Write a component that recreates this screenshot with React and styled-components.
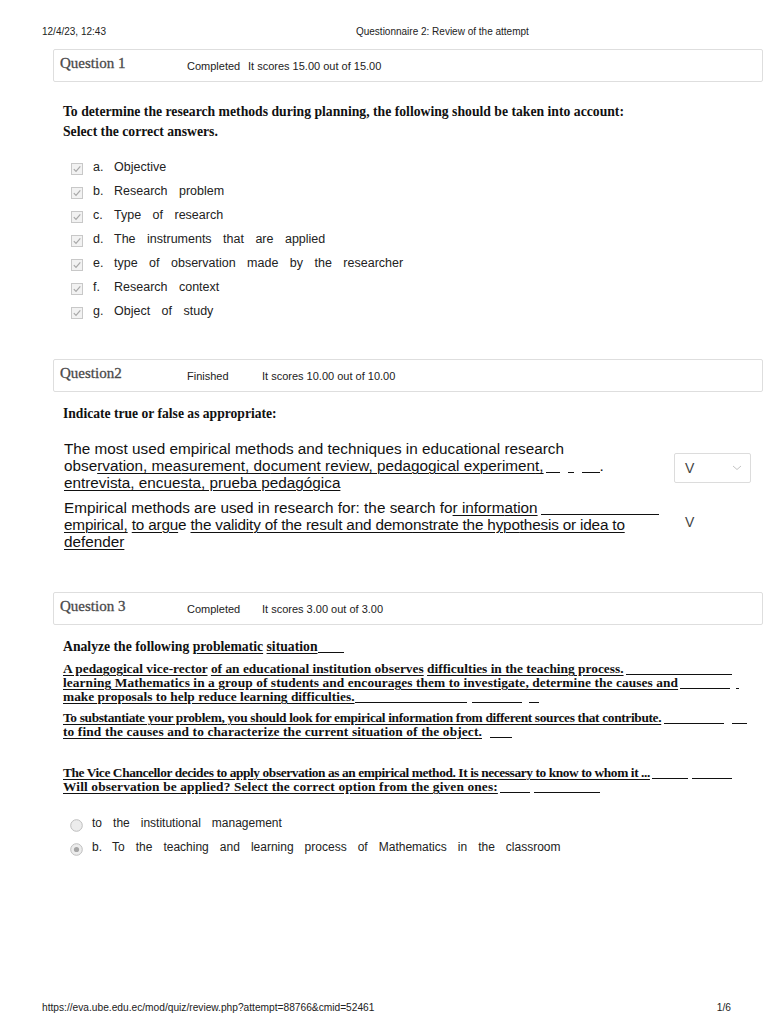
import React from 'react';
import styled, { createGlobalStyle } from 'styled-components';

// ------------------------------------ Global ---------------------------------------------
const GlobalStyle = createGlobalStyle`
  html, body {
    margin: 0;
    padding: 0;
    background: #fff;
  }
  body {
    font-family: "Liberation Sans", Arial, sans-serif;
    color: #222;
  }
`;

// ------------------------------------ Styled Components ----------------------------------
const Page = styled.div`
  width: 768px;
  height: 1024px;
  display: flex;
  flex-direction: column;
  overflow: hidden;
`;

const TopBar = styled.div`
  display: flex;
  padding: 26px 0 0 42px;
  font-size: 10px;
  color: #222;
  height: 14px;
`;

const PageTitle = styled.div`
  margin-left: 250px;
`;

const Main = styled.div`
  padding: 9px 5px 0 53px;
  display: flex;
  flex-direction: column;
`;

const InfoBox = styled.div`
  display: flex;
  align-items: flex-start;
  height: 33px;
  border: 1px solid #dedede;
  border-radius: 2px;
  padding: 5px 0 0 6px;
  box-sizing: border-box;
  margin-top: ${(p) => p.$mt || 0}px;
`;

const QName = styled.div`
  font-family: "Liberation Serif", "Times New Roman", serif;
  font-size: 15px;
  color: #4a4a4a;
  width: 127px;
  -webkit-text-stroke: 0.3px #4a4a4a;
`;

const QState = styled.div`
  font-size: 11px;
  padding-top: 5px;
  width: ${(p) => p.$w}px;
`;

const QScore = styled.div`
  font-size: 11px;
  padding-top: 5px;
`;

const Prompt = styled.div`
  font-family: "Liberation Serif", "Times New Roman", serif;
  font-weight: bold;
  font-size: ${(p) => p.$fs || 13.7}px;
  line-height: ${(p) => p.$lh || 20}px;
  color: #111;
  padding-left: 10px;
  margin-top: ${(p) => p.$mt || 0}px;
`;

const OptionList = styled.div`
  display: flex;
  flex-direction: column;
  padding-left: ${(p) => p.$pl || 18}px;
  margin-top: ${(p) => p.$mt || 0}px;
`;

const OptionRow = styled.div`
  display: flex;
  align-items: center;
  height: 24px;
  font-size: ${(p) => p.$fs || 12.5}px;
  color: #222;
`;

const Mark = styled.div`
  width: 13px;
  display: flex;
  align-items: center;
  margin-right: ${(p) => p.$gap || 9}px;
  padding-top: 4px;
`;

const Letter = styled.span`
  width: ${(p) => p.$w || 21}px;
`;

const OptionText = styled.span`
  word-spacing: ${(p) => p.$ws || 8}px;
`;

const Statement = styled.div`
  display: flex;
  align-items: flex-start;
  padding-left: 11px;
  margin-top: ${(p) => p.$mt || 0}px;
`;

const StatementText = styled.div`
  width: 610px;
  font-size: 15.3px;
  line-height: 17px;
  color: #111;
`;

const Tight = styled.span`
  letter-spacing: ${(p) => p.$ls}px;
`;

const SelectBox = styled.div`
  margin-top: ${(p) => p.$mt || 0}px;
  width: 77px;
  height: 30px;
  box-sizing: border-box;
  border: ${(p) => (p.$plain ? '1px solid transparent' : '1px solid #dcdcdc')};
  border-radius: 2px;
  display: flex;
  align-items: center;
  justify-content: space-between;
  padding: 0 8px 0 10px;
  font-size: 14px;
  color: #444;
`;

const U = styled.span`
  text-decoration: underline;
  text-decoration-thickness: 1px;
  text-underline-offset: 2px;
  ${(p) => (p.$ls ? `letter-spacing: ${p.$ls}px;` : '')}
`;

const Blank = styled.span`
  display: inline-block;
  width: ${(p) => p.$w}px;
  margin-left: ${(p) => p.$ml || 0}px;
  border-bottom: 1px solid #111;
  height: 1px;
  vertical-align: baseline;
  transform: translateY(2px);
`;

const Para = styled.div`
  font-family: "Liberation Serif", "Times New Roman", serif;
  font-weight: bold;
  font-size: 13.4px;
  line-height: 14px;
  color: #111;
  padding-left: 10px;
  white-space: nowrap;
  margin-top: ${(p) => p.$mt || 0}px;
`;

const Footer = styled.div`
  margin-top: auto;
  display: flex;
  justify-content: space-between;
  padding: 0 37px 11px 42px;
  font-size: 10.2px;
  color: #222;
`;

// ------------------------------------ Icons ----------------------------------------------
const CheckMark = () => (
  <svg width="12" height="12" viewBox="0 0 12 12">
    <rect x="0.5" y="0.5" width="11" height="11" fill="#f2f2f2" stroke="#c8c8c8" />
    <path d="M2.8 6.2 L5 8.4 L9.3 3.4" fill="none" stroke="#a8a8a8" strokeWidth="1.2" />
  </svg>
);

const RadioMark = ({ checked }) => (
  <svg width="13" height="13" viewBox="0 0 13 13">
    <circle cx="6.5" cy="6.5" r="5.8" fill="#ececec" stroke="#bdbdbd" />
    {checked && <circle cx="6.5" cy="6.5" r="2.6" fill="#a5a5a5" />}
  </svg>
);

const Chevron = () => (
  <svg width="10" height="6" viewBox="0 0 10 6">
    <path d="M1 1 L5 4.5 L9 1" fill="none" stroke="#c4c4c4" strokeWidth="1" />
  </svg>
);

// ------------------------------------ Data -----------------------------------------------
const q1Options = [
  ['a.', 'Objective'],
  ['b.', 'Research problem'],
  ['c.', 'Type of research'],
  ['d.', 'The instruments that are applied'],
  ['e.', 'type of observation made by the researcher'],
  ['f.', 'Research context'],
  ['g.', 'Object of study'],
];

const App = () => {
  return (
    <Page>
      <GlobalStyle />
      <TopBar>
        <div>12/4/23, 12:43</div>
        <PageTitle>Questionnaire 2: Review of the attempt</PageTitle>
      </TopBar>

      <Main>
        {/* ---------------- Question 1 ---------------- */}
        <InfoBox>
          <QName>Question 1</QName>
          <QState $w={61}>Completed</QState>
          <QScore>It scores 15.00 out of 15.00</QScore>
        </InfoBox>

        <Prompt $mt={20}>
          To determine the research methods during planning, the following should be taken into account:
          <br />
          Select the correct answers.
        </Prompt>

        <OptionList $mt={13}>
          {q1Options.map(([letter, text]) => (
            <OptionRow key={letter}>
              <Mark>
                <CheckMark />
              </Mark>
              <Letter>{letter}</Letter>
              <OptionText>{text}</OptionText>
            </OptionRow>
          ))}
        </OptionList>

        {/* ---------------- Question 2 ---------------- */}
        <InfoBox $mt={36}>
          <QName>Question2</QName>
          <QState $w={75}>Finished</QState>
          <QScore>It scores 10.00 out of 10.00</QScore>
        </InfoBox>

        <Prompt $mt={12} $fs={13.6}>
          Indicate true or false as appropriate:
        </Prompt>

        <Statement $mt={16}>
          <StatementText>
            The most used empirical methods and techniques in educational research
            <br />
            obse<U>rvation, mea</U><U>surement, do</U><U>cument review, pedagogica</U>
            <U>l experimen</U><U>t,</U>
            <Blank $w={14} $ml={2} />
            <Blank $w={6} $ml={8} />
            <Blank $w={18} $ml={8} />.
            <br />
            <U>entrevista, encuesta, prueba pedagógica</U>
          </StatementText>
          <SelectBox $mt={13}>
            <span>V</span>
            <Chevron />
          </SelectBox>
        </Statement>

        <Statement $mt={8}>
          <StatementText>
            Empirical methods are used in research for: the search fo<U>r inform</U>
            <U>ation</U>
            <Blank $w={118} $ml={3} />
            <br />
            <Tight $ls={-0.18}>
              <U>empirical,</U> <U>to argu</U>e <U>the validity of the result and demo</U>
              <U>nstrate the hypo</U><U>thesis or idea to</U>
            </Tight>
            <br />
            <U>defender</U>
          </StatementText>
          <SelectBox $plain $mt={8}>
            <span>V</span>
          </SelectBox>
        </Statement>

        {/* ---------------- Question 3 ---------------- */}
        <InfoBox $mt={42}>
          <QName>Question 3</QName>
          <QState $w={75}>Completed</QState>
          <QScore>It scores 3.00 out of 3.00</QScore>
        </InfoBox>

        <Prompt $mt={12} $fs={13.7}>
          Analyze the following <U>problematic</U> <U>situation</U>
          <Blank $w={26} />
        </Prompt>

        <Para $mt={5}>
          <U>A pedagogical vice-rector</U> <U>of an educational institution observes</U>{' '}
          <U>difficulties in the teaching process.</U>
          <Blank $w={106} $ml={2} />
          <br />
          <U $ls={0.08}>learning Mathematics in a group of students and encourages them to investigate, determine the causes and</U>
          <Blank $w={50} $ml={2} />
          <Blank $w={3} $ml={6} />
          <br />
          <U>make proposals to help reduce learning difficulties.</U>
          <Blank $w={112} />
          <Blank $w={50} $ml={5} />
          <Blank $w={10} $ml={7} />
        </Para>

        <Para $mt={7}>
          <U $ls={-0.35}>To substantiate your problem, you should look for empirical information from different sources that contribute.</U>
          <Blank $w={60} $ml={3} />
          <Blank $w={15} $ml={8} />
          <br />
          <U $ls={0.12}>to find the causes and to characterize the current situation of the object.</U>
          <Blank $w={22} $ml={8} />
        </Para>

        <Para $mt={27}>
          <U $ls={-0.41}>The Vice Chancellor decides to apply observation as an empirical method. It is necessary to know to whom it ...</U>
          <Blank $w={36} $ml={2} />
          <Blank $w={40} $ml={4} />
          <br />
          <U $ls={0.13}>Will observation be applied? Select the correct option from the given ones:</U>
          <Blank $w={30} $ml={2} />
          <Blank $w={66} $ml={4} />
        </Para>

        <OptionList $mt={17} $pl={17}>
          <OptionRow $fs={12}>
            <Mark $gap={9}>
              <RadioMark />
            </Mark>
            <OptionText $ws={7.7}>to the institutional management</OptionText>
          </OptionRow>
          <OptionRow $fs={12}>
            <Mark $gap={9}>
              <RadioMark checked />
            </Mark>
            <Letter $w={20}>b.</Letter>
            <OptionText $ws={7.7}>To the teaching and learning process of Mathematics in the classroom</OptionText>
          </OptionRow>
        </OptionList>
      </Main>

      <Footer>
        <div>https://eva.ube.edu.ec/mod/quiz/review.php?attempt=88766&amp;cmid=52461</div>
        <div>1/6</div>
      </Footer>
    </Page>
  );
};

export default App;
